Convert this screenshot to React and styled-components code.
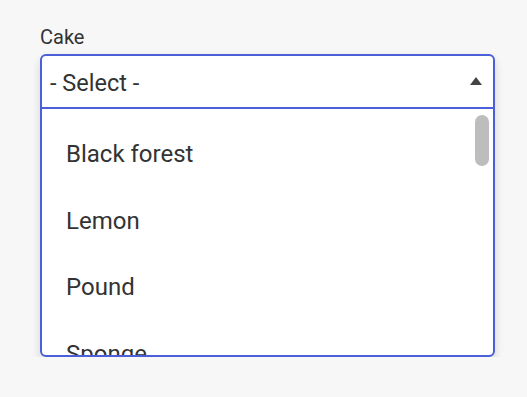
import React from "react";
import styled, { createGlobalStyle } from "styled-components";

const Global = createGlobalStyle`
  html, body {
    margin: 0;
    padding: 0;
    background: #f7f7f7;
    font-family: Roboto, "Liberation Sans", sans-serif;
    color: #333;
  }
`;

const Page = styled.div`
  padding: 24px 32px 0 40px;
  width: 455px;
`;

const Label = styled.div`
  font-size: 20px;
  line-height: 26px;
  margin-bottom: 4px;
  color: #333;
`;

const Box = styled.div`
  border: 2px solid #4a5fd8;
  border-radius: 6px;
  background: #fff;
  box-shadow: 0 5px 10px rgba(0, 0, 0, 0.14);
  overflow: hidden;
`;

const Trigger = styled.div`
  display: flex;
  align-items: center;
  justify-content: space-between;
  height: 49px;
  padding: 2px 11px 0 8px;
  border-bottom: 2px solid #4a5fd8;
  font-size: 23.5px;
`;

const Caret = styled.span`
  width: 0;
  height: 0;
  border-left: 6px solid transparent;
  border-right: 6px solid transparent;
  border-bottom: 8px solid #444;
  margin-top: -3px;
`;

const ListWrap = styled.div`
  position: relative;
`;

const List = styled.ul`
  list-style: none;
  margin: 0;
  padding: 12px 0 0;
  height: 234px;
  overflow-y: scroll;
  scrollbar-width: none;

  &::-webkit-scrollbar {
    display: none;
  }
`;

const Thumb = styled.div`
  position: absolute;
  top: 6px;
  right: 4px;
  width: 14px;
  height: 51px;
  border-radius: 7px;
  background: #bdbdbd;
`;

const Item = styled.li`
  height: 66.5px;
  display: flex;
  align-items: center;
  padding-left: 24px;
  font-size: 24px;
  color: #333;
`;

const cakes = [
  "Black forest",
  "Lemon",
  "Pound",
  "Sponge",
  "Carrot",
  "Cheesecake",
  "Chocolate",
  "Coffee",
  "Fruit",
  "Red velvet",
  "Angel food",
  "Victoria",
  "Tres leches",
  "Marble",
  "Banana",
  "Genoise",
];

export default function App() {
  return (
    <>
      <Global />
      <Page>
        <Label>Cake</Label>
        <Box>
          <Trigger>
            <span>- Select -</span>
            <Caret />
          </Trigger>
          <ListWrap>
            <List>
              {cakes.map((c) => (
                <Item key={c}>{c}</Item>
              ))}
            </List>
            <Thumb />
          </ListWrap>
        </Box>
      </Page>
    </>
  );
}
